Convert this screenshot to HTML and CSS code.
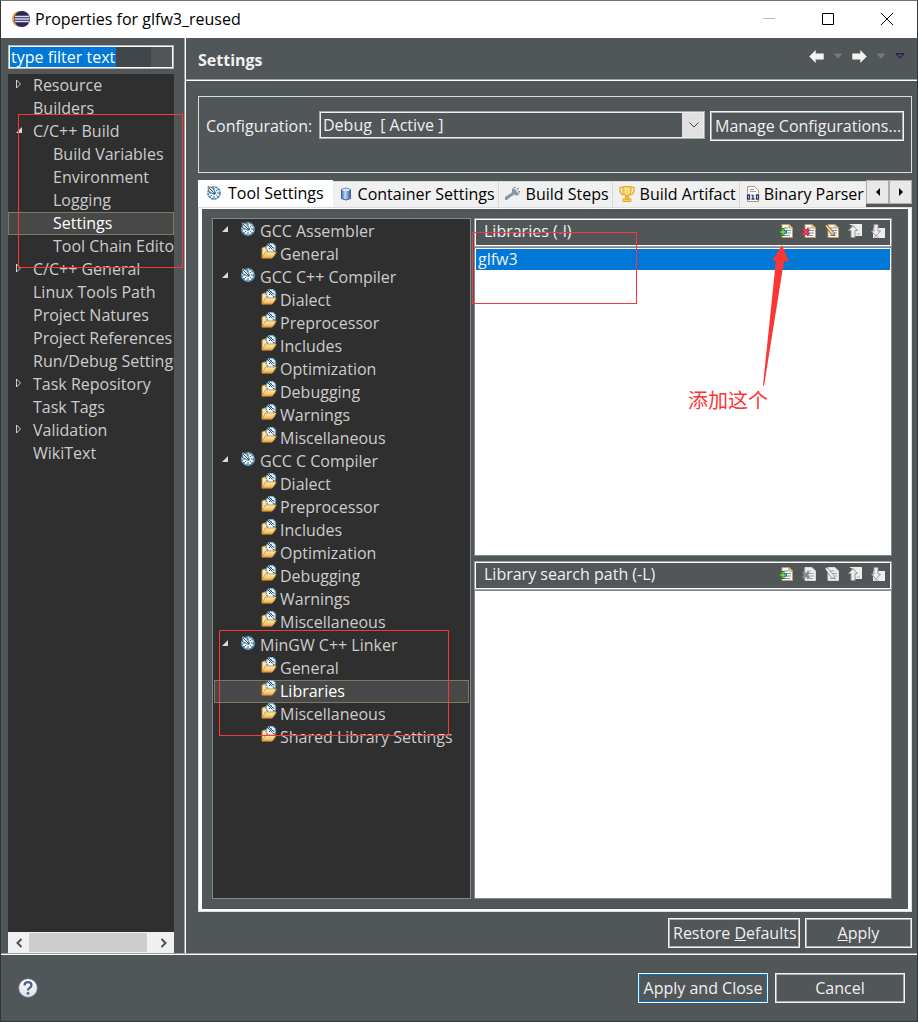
FILE: index.html
```html
<!DOCTYPE html>
<html lang="en">
<head>
<meta charset="utf-8">
<title>Properties for glfw3_reused</title>
<link rel="stylesheet" href="styles.css">
</head>
<body>
<svg class="defs" aria-hidden="true">
  <defs>
    <linearGradient id="blue" x1="0" x2="1"><stop offset="0" stop-color="#3566b0"/><stop offset=".4" stop-color="#c9dcf5"/><stop offset="1" stop-color="#2d5aa5"/></linearGradient>
    <linearGradient id="gold" x1="0" y1="0" x2="0" y2="1"><stop offset="0" stop-color="#fff0bd"/><stop offset="1" stop-color="#eeb04b"/></linearGradient>
    <linearGradient id="shine" x1="0" y1="0" x2="0" y2="1"><stop offset="0" stop-color="#fff"/><stop offset="1" stop-color="#dcdfe6"/></linearGradient>
    <symbol id="tool" viewBox="0 0 14 14">
      <circle cx="7" cy="7" r="6.200" fill="#e9f4fb" stroke="#a9d3e8" stroke-width="1.200"/>
      <circle cx="7" cy="7" r="6" fill="none" stroke="#3f81ad" stroke-width="1.500" stroke-dasharray="2.200 1"/>
      <path d="M7 2v2M12 7h-2M7 12v-2M2 7h2M10.500 3.500L9 5M10.500 10.500L9.300 9.300M3.500 10.500L5 9" stroke="#2f739f" fill="none"/>
      <path d="M1 .5l4.500 1.200 3 5.100-1.700 1.500L1.500 5.500z" fill="#dbe4e8" stroke="#42545f" stroke-width=".8"/>
      <path d="M2 2l5 5" stroke="#30454f" stroke-width=".9"/>
      <circle cx="7.600" cy="7.600" r="1" fill="#233e50"/>
    </symbol>
    <symbol id="folder" viewBox="0 0 16 16">
      <path d="M1 5l2-1h4v3h7v5l-3 3H1z" fill="#fbe5ab" stroke="#b9822d"/>
      <circle cx="10" cy="5" r="5" fill="#e9f4fb"/>
      <circle cx="10" cy="5" r="4.800" fill="none" stroke="#4c8db6" stroke-width="1.200" stroke-dasharray="2 .7"/>
      <path d="M6 1l5.500 5.500M8 1l4 4M10 2v1.500M13.500 5H12M8 5.500h1M12 7.500h1" stroke="#344f60" fill="none"/>
      <path d="M4.500 9h10.800l-4 6H1z" fill="url(#gold)" stroke="#d08b2b" stroke-width=".8"/>
    </symbol>
    <symbol id="page" viewBox="0 0 14 14">
      <path d="M3 .5h7L13.500 4v9.500H3z" fill="#f4f8ff" stroke="#c6a04e"/>
      <path d="M10 .5V4h3.500" fill="#f5d48b" stroke="#c6a04e"/>
      <path d="M5 4h4M5 6.500h7M5 9h7M5 11.500h6" stroke="#668bc1" stroke-width=".9"/>
    </symbol>
    <symbol id="page-off" viewBox="0 0 14 14">
      <path d="M3 .5h7L13.500 4v9.500H3z" fill="#eee" stroke="#d8d8d8"/>
      <path d="M5 4h4M5 6.500h7M5 9h7M5 11.500h6" stroke="#a5a5a5"/>
    </symbol>
    <symbol id="add" viewBox="0 0 14 14"><use href="#page" width="14" height="14"/><path d="M2.500 4h3v2.500H8v3H5.500V12h-3V9.500H0v-3h2.500z" fill="#177b32"/><path d="M4 5v6M1 8h6" stroke="#b8e45e"/></symbol>
    <symbol id="del" viewBox="0 0 14 14"><use href="#page" width="14" height="14"/><path d="M1 5l6 6M7 5l-6 6" stroke="#c92a3e" stroke-width="3.200"/><path d="M1 5l6 6M7 5l-6 6" stroke="#f05365"/></symbol>
    <symbol id="edit" viewBox="0 0 14 14"><use href="#page" width="14" height="14"/><path d="M0 1.500L2 .5l7 8 .5 3-3-1z" fill="#f0c070" stroke="#74502b" stroke-width=".8"/><path d="M1 2l7 8" stroke="#fff1c4" stroke-width=".7"/></symbol>
    <symbol id="del-off" viewBox="0 0 14 14"><use href="#page-off" width="14" height="14"/><path d="M1 5l6 6M7 5l-6 6" stroke="#8b8b8b" stroke-width="3"/></symbol>
    <symbol id="edit-off" viewBox="0 0 14 14"><use href="#page-off" width="14" height="14"/><path d="M0 1.500L2 .5l7 8 .5 3-3-1z" fill="#f1f1f1" stroke="#888" stroke-width=".8"/></symbol>
    <symbol id="up" viewBox="0 0 14 14"><path d="M1 0h13v12H7V3z" fill="#eee"/><path d="M5 1.500L9.500 6.500H7v7H3v-7H.5z" fill="#eee" stroke="#999"/><path d="M9 10h3" stroke="#aaa"/></symbol>
    <symbol id="down" viewBox="0 0 14 14"><path d="M2 4h12v10H2z" fill="#eee"/><path d="M3 .5h4V7h2.500L5 12 .5 7H3z" fill="#eee" stroke="#999"/><path d="M3 13h5" stroke="#aaa"/></symbol>
    <symbol id="open" viewBox="0 0 8 8"><path d="M7 1v6H1z" fill="#d8d8d8"/></symbol>
    <symbol id="closed" viewBox="0 0 8 10"><path d="M1.500 1v8l4-4z" fill="none" stroke="#d0d0d0"/></symbol>
  </defs>
</svg>

<div class="window">
  <header class="titlebar">
    <svg class="app-icon" viewBox="0 0 18 18"><circle cx="8" cy="9" r="8" fill="#f2a03d"/><circle cx="10" cy="9" r="8" fill="#2d2757"/><path d="M3 6.500h14M2.500 9h15M3 11.500h14" stroke="#d9dcf2" stroke-width="1.300"/></svg>
    <h1 class="title">Properties for glfw3_reused</h1>
    <div class="window-controls">
      <button class="win-btn" aria-label="Minimize"><svg viewBox="0 0 14 14"><path d="M1 6.500h12" stroke="#bcbcbc"/></svg></button>
      <button class="win-btn" aria-label="Maximize"><svg viewBox="0 0 14 14"><path d="M1.500 1.500h11v11h-11z" fill="none" stroke="#000"/></svg></button>
      <button class="win-btn" aria-label="Close"><svg viewBox="0 0 14 14"><path d="M1 1l12 12M13 1L1 13" stroke="#000"/></svg></button>
    </div>
  </header>

  <div class="body">
    <nav class="sidebar">
      <input class="filter" type="text" value="type filter text" aria-label="Filter">
      <div class="nav-area">
        <ul class="tree nav-tree">
          <li class="row"><svg class="twist"><use href="#closed"/></svg>Resource</li>
          <li class="row">Builders</li>
          <li class="row"><svg class="twist"><use href="#open"/></svg>C/C++ Build</li>
          <li class="row child">Build Variables</li>
          <li class="row child">Environment</li>
          <li class="row child">Logging</li>
          <li class="row child selected">Settings</li>
          <li class="row child">Tool Chain Editor</li>
          <li class="row"><svg class="twist"><use href="#closed"/></svg>C/C++ General</li>
          <li class="row">Linux Tools Path</li>
          <li class="row">Project Natures</li>
          <li class="row">Project References</li>
          <li class="row">Run/Debug Settings</li>
          <li class="row"><svg class="twist"><use href="#closed"/></svg>Task Repository</li>
          <li class="row">Task Tags</li>
          <li class="row"><svg class="twist"><use href="#closed"/></svg>Validation</li>
          <li class="row">WikiText</li>
        </ul>
        <div class="mark mark-nav"></div>
      </div>
      <div class="scrollbar">
        <button class="scroll-btn" aria-label="Scroll left"><svg viewBox="0 0 8 10"><path d="M6.500 1l-4 4 4 4" fill="none" stroke="#505050" stroke-width="2"/></svg></button>
        <div class="thumb"></div>
        <button class="scroll-btn" aria-label="Scroll right"><svg viewBox="0 0 8 10"><path d="M1.500 1l4 4-4 4" fill="none" stroke="#505050" stroke-width="2"/></svg></button>
      </div>
    </nav>

    <main class="main">
      <div class="page-head">
        <h2 class="page-title">Settings</h2>
        <div class="history">
          <button class="hist-btn" aria-label="Back"><svg class="arrow" viewBox="0 0 14 12"><path d="M.5 6L6 .5v3h7.500v5H6v3z" fill="#f4f4f0" stroke="#e4e4e0" stroke-width=".6"/></svg></button>
          <button class="hist-btn" aria-label="Back history"><svg class="drop" viewBox="0 0 10 6"><path d="M.5 .5h9L5 5.500z" fill="#777b7d"/></svg></button>
          <button class="hist-btn" aria-label="Forward"><svg class="arrow" viewBox="0 0 14 12"><path d="M13.500 6L8 .5v3H.5v5H8v3z" fill="#f4f4f0" stroke="#e4e4e0" stroke-width=".6"/></svg></button>
          <button class="hist-btn" aria-label="Forward history"><svg class="drop" viewBox="0 0 10 6"><path d="M.5 .5h9L5 5.500z" fill="#777b7d"/></svg></button>
          <button class="hist-btn" aria-label="Menu"><svg class="drop" viewBox="0 0 10 6"><path d="M1 .8h8L5 5z" fill="#5b4a6d" stroke="#231033"/></svg></button>
        </div>
      </div>

      <div class="content">
        <div class="config">
          <label for="cfg">Configuration:</label>
          <div class="select-wrap">
            <select id="cfg" class="select"><option>Debug&nbsp; [ Active ]</option></select>
            <svg class="chevron" viewBox="0 0 10 6"><path d="M.5 .5L5 5 9.500 .5" fill="none" stroke="#444"/></svg>
          </div>
          <button class="btn">Manage Configurations...</button>
        </div>

        <div class="tabs" role="tablist">
          <button class="tab active" role="tab" aria-selected="true"><svg class="ico14"><use href="#tool"/></svg>Tool Settings</button>
          <button class="tab" role="tab"><svg class="ico14" viewBox="0 0 14 14"><path d="M2.500 2.500Q7-.5 11.500 2.500v9Q7 14.500 2.500 11.500z" fill="url(#blue)" stroke="#3865aa"/><ellipse cx="7" cy="2.700" rx="3.800" ry="1.300" fill="#d9e7fa"/></svg>Container Settings</button>
          <button class="tab" role="tab"><svg class="ico16" viewBox="0 0 16 16"><path d="M0 14v-3l7-4.500V3l2-1 5 7-3 .5-1.500-1L4 12l-2 2z" fill="#8597a6"/><path d="M9 1.500h2M12 2.500h2M11 4h2M13 5.500h2M12 7h3" stroke="#8597a6"/></svg>Build Steps</button>
          <button class="tab" role="tab"><svg class="ico16" viewBox="0 0 16 16"><path d="M4 1.500H1v4l2 3h2M12 1.500h3v4l-2 3h-2" fill="none" stroke="#eab02d" stroke-width="1.400"/><path d="M4 .5h8v6L9.500 10h-3L4 6.500zM6.500 10h3v3h-3zM4 13h8v2.500H4z" fill="#ffd15c" stroke="#e5a528"/><path d="M7 2v6M9.500 2v5" stroke="#fff0a4"/></svg>Build Artifact</button>
          <button class="tab last" role="tab"><svg class="ico16" viewBox="0 0 16 16"><path d="M2.500 .5h7l4 4v11h-11z" fill="#f5f8ff" stroke="#b5985b"/><path d="M5 3.500h4M5 5.500h6" stroke="#86a4cf"/><path d="M1 7.500h14v6.500H1z" fill="#f5f8ff"/><path d="M2.500 9h2v4h-2zM11.500 9h2v4h-2zM6.500 9.500H8V13M6.500 13h3" fill="none" stroke="#243b5d" stroke-width="1.300"/></svg><span class="tab-text">Binary Parser</span></button>
          <div class="tab-nav">
            <button class="tab-arrow" aria-label="Previous tabs"><svg viewBox="0 0 6 8"><path d="M5 0v8L1 4z"/></svg></button>
            <button class="tab-arrow" aria-label="Next tabs"><svg viewBox="0 0 6 8"><path d="M1 0v8l4-4z"/></svg></button>
          </div>
        </div>

        <div class="panel">
          <div class="tool-area">
            <ul class="tree tool-tree">
              <li class="row group"><svg class="twist"><use href="#open"/></svg><svg class="ico14"><use href="#tool"/></svg>GCC Assembler</li>
              <li class="row leaf"><svg class="ico16"><use href="#folder"/></svg>General</li>
              <li class="row group"><svg class="twist"><use href="#open"/></svg><svg class="ico14"><use href="#tool"/></svg>GCC C++ Compiler</li>
              <li class="row leaf"><svg class="ico16"><use href="#folder"/></svg>Dialect</li>
              <li class="row leaf"><svg class="ico16"><use href="#folder"/></svg>Preprocessor</li>
              <li class="row leaf"><svg class="ico16"><use href="#folder"/></svg>Includes</li>
              <li class="row leaf"><svg class="ico16"><use href="#folder"/></svg>Optimization</li>
              <li class="row leaf"><svg class="ico16"><use href="#folder"/></svg>Debugging</li>
              <li class="row leaf"><svg class="ico16"><use href="#folder"/></svg>Warnings</li>
              <li class="row leaf"><svg class="ico16"><use href="#folder"/></svg>Miscellaneous</li>
              <li class="row group"><svg class="twist"><use href="#open"/></svg><svg class="ico14"><use href="#tool"/></svg>GCC C Compiler</li>
              <li class="row leaf"><svg class="ico16"><use href="#folder"/></svg>Dialect</li>
              <li class="row leaf"><svg class="ico16"><use href="#folder"/></svg>Preprocessor</li>
              <li class="row leaf"><svg class="ico16"><use href="#folder"/></svg>Includes</li>
              <li class="row leaf"><svg class="ico16"><use href="#folder"/></svg>Optimization</li>
              <li class="row leaf"><svg class="ico16"><use href="#folder"/></svg>Debugging</li>
              <li class="row leaf"><svg class="ico16"><use href="#folder"/></svg>Warnings</li>
              <li class="row leaf"><svg class="ico16"><use href="#folder"/></svg>Miscellaneous</li>
              <li class="row group"><svg class="twist"><use href="#open"/></svg><svg class="ico14"><use href="#tool"/></svg>MinGW C++ Linker</li>
              <li class="row leaf"><svg class="ico16"><use href="#folder"/></svg>General</li>
              <li class="row leaf selected"><svg class="ico16"><use href="#folder"/></svg>Libraries</li>
              <li class="row leaf"><svg class="ico16"><use href="#folder"/></svg>Miscellaneous</li>
              <li class="row leaf"><svg class="ico16"><use href="#folder"/></svg>Shared Library Settings</li>
            </ul>
            <div class="mark mark-linker"></div>
          </div>

          <div class="lists">
            <section class="list-block">
              <div class="list-head">
                <h3 class="list-title">Libraries (-l)</h3>
                <div class="list-tools">
                  <button class="tool-btn" aria-label="Add"><svg class="ico14"><use href="#add"/></svg></button>
                  <button class="tool-btn" aria-label="Delete"><svg class="ico14"><use href="#del"/></svg></button>
                  <button class="tool-btn" aria-label="Edit"><svg class="ico14"><use href="#edit"/></svg></button>
                  <button class="tool-btn" aria-label="Move up"><svg class="ico14"><use href="#up"/></svg></button>
                  <button class="tool-btn" aria-label="Move down"><svg class="ico14"><use href="#down"/></svg></button>
                </div>
              </div>
              <ul class="list"><li class="item">glfw3</li></ul>
              <div class="mark mark-list"></div>
              <svg class="pointer" viewBox="0 0 28 142"><path d="M20 0l7 17-5-1L2 141 1 140 14 15 10 16z" fill="#fd3535"/></svg>
              <p class="note" lang="zh">添加这个</p>
            </section>
            <section class="list-block">
              <div class="list-head">
                <h3 class="list-title">Library search path (-L)</h3>
                <div class="list-tools">
                  <button class="tool-btn" aria-label="Add"><svg class="ico14"><use href="#add"/></svg></button>
                  <button class="tool-btn" aria-label="Delete"><svg class="ico14"><use href="#del-off"/></svg></button>
                  <button class="tool-btn" aria-label="Edit"><svg class="ico14"><use href="#edit-off"/></svg></button>
                  <button class="tool-btn" aria-label="Move up"><svg class="ico14"><use href="#up"/></svg></button>
                  <button class="tool-btn" aria-label="Move down"><svg class="ico14"><use href="#down"/></svg></button>
                </div>
              </div>
              <ul class="list"></ul>
            </section>
          </div>
        </div>

        <div class="page-actions">
          <button class="btn restore">Restore <u>D</u>efaults</button>
          <button class="btn apply"><u>A</u>pply</button>
        </div>
      </div>
    </main>
  </div>

  <footer class="footer">
    <button class="help" aria-label="Help"><svg viewBox="0 0 20 20"><circle cx="10" cy="10" r="9.300" fill="url(#shine)" stroke="#6c7fa6" stroke-width=".8"/><path d="M6.500 7.500Q6.500 4.200 10 4.200t3.500 3q0 1.500-1.800 2.600Q10 10.900 10 12.500" fill="none" stroke="#4c6189" stroke-width="2.200"/><circle cx="10" cy="15.300" r="1.400" fill="#4c6189"/></svg></button>
    <button class="btn wide primary">Apply and Close</button>
    <button class="btn wide">Cancel</button>
  </footer>
</div>
</body>
</html>
```

FILE: styles.css
```css
* { box-sizing: border-box; }
body {
  margin: 0;
  font: 16px/22px "Open Sans", "Noto Sans", "Noto Sans CJK SC", sans-serif;
  color: #f0f0f0;
  background: #515658;
}
button, input, select { font: inherit; color: inherit; }
button { margin: 0; padding: 0; border: 0; background: none; }
h1, h2, h3, p, ul { margin: 0; padding: 0; font-weight: 400; font-size: inherit; }
ul { list-style: none; }
svg { display: block; flex: none; }
.defs { position: absolute; width: 0; height: 0; }
.ico14 { width: 14px; height: 14px; }
.ico16 { width: 16px; height: 16px; }

.window {
  display: flex;
  flex-direction: column;
  min-height: 100vh;
  border: 1px solid #333639;
  border-top-color: #707274;
}
.titlebar {
  display: flex;
  align-items: center;
  height: 37px;
  padding: 0 1px 1px 11px;
  color: #000;
  background: #fff;
}
.app-icon { width: 18px; height: 18px; }
.title { flex: 1; padding-left: 5px; white-space: nowrap; }
.window-controls { display: flex; }
.win-btn { display: grid; place-items: center; width: 59px; height: 36px; }
.win-btn svg { width: 14px; height: 14px; }

.body { flex: 1; display: flex; }
.sidebar {
  flex: none;
  display: flex;
  flex-direction: column;
  width: 185px;
  padding: 7px 11px 0 7px;
  border-right: 1px solid #fff;
  box-shadow: inset -1px 0 #a0a0a0;
}
.filter {
  width: 100%;
  height: 24px;
  margin-bottom: 5px;
  padding: 0 2px;
  border: 1px solid #b4b6b7;
  outline: 0;
  color: #fff;
  background: linear-gradient(90deg, #0078d7 107px, #41464a 107px 142px, #515658 142px);
  box-shadow: inset 0 0 0 1px #fff;
}
.nav-area { position: relative; flex: 1; display: flex; }
.tree { flex: 1; min-width: 0; overflow: hidden; color: #ccc; background: #2f2f2f; }
.row {
  position: relative;
  display: flex;
  align-items: center;
  height: 23px;
  padding-bottom: 1px;
  white-space: nowrap;
}
.nav-tree .row { padding-left: 25px; }
.nav-tree .child { padding-left: 45px; }
.row.selected { color: #fff; background: #484848; box-shadow: inset 0 0 0 1px #7c7a60; }
.twist { position: absolute; left: 7px; top: 5px; width: 8px; height: 10px; }
.scrollbar { display: flex; height: 21px; padding: 1px 0; background: #f0f0f0; }
.scroll-btn { display: grid; place-items: center; width: 21px; }
.scroll-btn svg { width: 8px; height: 10px; }
.thumb { width: 118px; background: #cdcdcd; }
.scrollbar .scroll-btn:last-child { margin-left: auto; }

.mark { position: absolute; border: 1px solid #fd3535; pointer-events: none; }
.mark-nav { left: 10px; right: -9px; top: 40px; height: 154px; }
.mark-linker { left: 7px; right: 22px; top: 412px; height: 106px; }
.mark-list { left: -2px; top: 14px; width: 165px; height: 72px; }

.main { flex: 1; min-width: 0; display: flex; flex-direction: column; }
.page-head {
  display: flex;
  justify-content: space-between;
  height: 43px;
  padding: 11px 12px 0 12px;
  border-bottom: 1px solid #fff;
  box-shadow: inset 0 -1px #a0a0a0;
}
.page-title { font-weight: 700; }
.history { display: flex; gap: 9px; height: 14px; align-items: center; }
.arrow { width: 15px; height: 13px; }
.drop { width: 10px; height: 6px; }
.content { flex: 1; display: flex; flex-direction: column; padding: 15px 5px 5px 12px; }
.config {
  display: flex;
  align-items: flex-start;
  height: 77px;
  margin-bottom: 7px;
  padding: 14px 7px;
  border: 1px solid #dcdcdc;
  white-space: nowrap;
}
.config label { width: 113px; padding-top: 4px; }
.select-wrap { position: relative; flex: 1; min-width: 0; margin-right: 5px; }
.select {
  display: block;
  width: 100%;
  height: 28px;
  padding: 0 24px 0 3px;
  border: 1px solid #a8a8a8;
  border-radius: 0;
  outline: 0;
  appearance: none;
  background: linear-gradient(#e1e1e1, #e1e1e1) right / 22px 100% no-repeat #515658;
  box-shadow: inset 0 0 0 1px #eee;
}
.chevron { position: absolute; right: 6px; top: 11px; width: 10px; height: 6px; pointer-events: none; }
.btn {
  height: 30px;
  padding: 0 4px;
  border: 1px solid #f4f4f4;
  box-shadow: inset 0 0 0 1px #adadad;
  white-space: nowrap;
}
.config .btn { width: 194px; }

.tabs { display: flex; align-items: flex-end; height: 27px; color: #000; white-space: nowrap; }
.tab {
  display: flex;
  flex: none;
  align-items: center;
  gap: 5px;
  height: 26px;
  padding: 0 3px 1px 6px;
  border-right: 1px solid #d9d9d9;
  border-top: 1px solid #d9d9d9;
  background: #f0f0f0;
}
.tab.active { gap: 7px; height: 27px; padding: 0 8px 3px 9px; border-color: #fff; background: #fff; }
.tab.last { flex: 1; min-width: 0; gap: 3px; border-right: 0; padding-left: 5px; padding-right: 0; }
.tab-text { overflow: hidden; }
.tab-nav { display: flex; flex: none; align-self: flex-start; }
.tab-arrow {
  display: grid;
  place-items: center;
  width: 23px;
  height: 24px;
  border: 1px solid #adadad;
  background: #e8e8e8;
}
.tab-arrow svg { width: 6px; height: 8px; }

.panel {
  flex: 1;
  display: flex;
  gap: 3px;
  padding: 9px 16px 10px 10px;
  border: 4px solid #fff;
  border-top-width: 2px;
  border-bottom-width: 3px;
  outline: 1px solid #dcdcdc;
  outline-offset: -1px;
}
.tool-area { position: relative; flex: 0 1 259px; display: flex; }
.tool-tree { padding: 1px; border: 1px solid #828790; }
.group { padding-left: 46px; }
.leaf { padding-left: 47px; gap: 3px; }
.tool-tree .twist { left: 7px; top: 4px; }
.group .ico14 { position: absolute; left: 27px; top: 2px; }
.leaf .ico16 { align-self: flex-start; }
.lists { flex: 1; min-width: 0; display: flex; flex-direction: column; gap: 5px; }
.list-block { position: relative; flex: 1; display: flex; flex-direction: column; }
.list-head {
  display: flex;
  align-items: center;
  justify-content: space-between;
  height: 29px;
  padding: 0 6px 3px 9px;
  border: 1px solid #a0a0a0;
  box-shadow: inset 0 0 0 1px #fff;
}
.list-tools { display: flex; gap: 9px; }
.list { flex: 1; padding: 1px; border: 1px solid #828790; background: #fff; }
.item { height: 21px; padding-left: 2px; line-height: 21px; background: #0078d7; }
.pointer { position: absolute; right: 102px; top: 27px; width: 28px; height: 142px; }
.note { position: absolute; right: 124px; top: 170px; font-size: 20px; line-height: 26px; color: #fd3535; }

.page-actions { display: flex; justify-content: flex-end; gap: 5px; padding-top: 6px; }
.restore { width: 132px; }
.apply { width: 107px; }
.footer {
  display: flex;
  align-items: center;
  gap: 7px;
  height: 68px;
  padding: 0 12px 0 17px;
  border-top: 1px solid #a0a0a0;
  box-shadow: inset 0 1px #fff;
}
.help { margin-right: auto; }
.help svg { width: 20px; height: 20px; }
.wide { width: 130px; }
.primary { box-shadow: inset 0 0 0 1px #0078d7; }
```
